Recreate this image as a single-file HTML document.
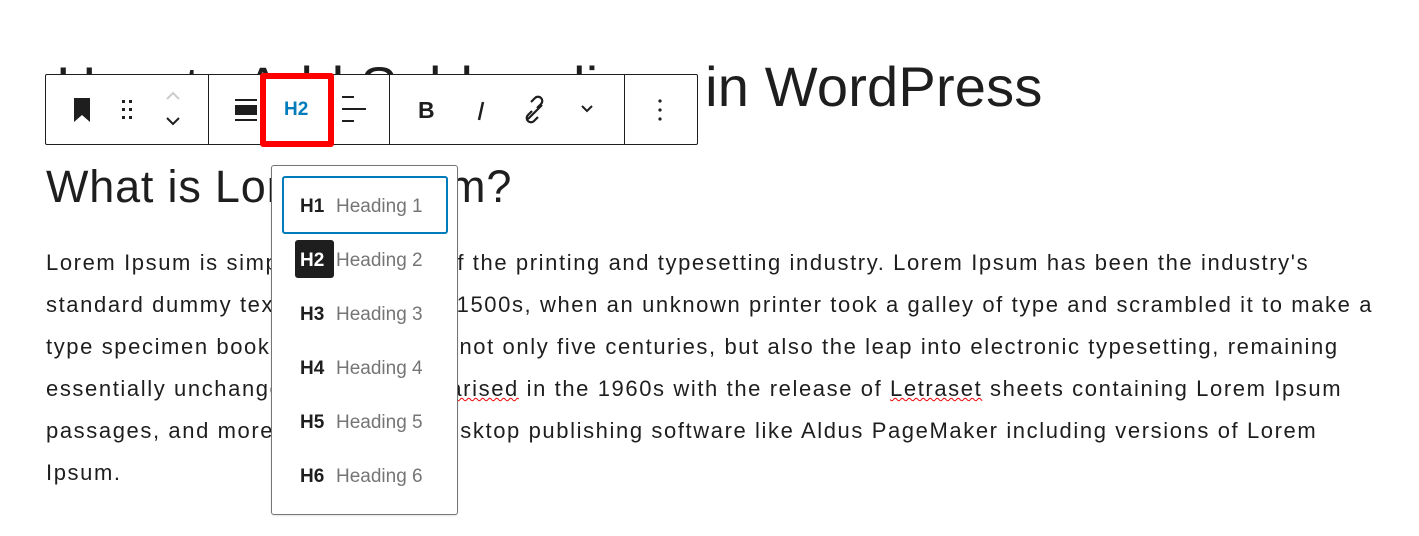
<!DOCTYPE html>
<html><head><meta charset="utf-8"><style>
body{margin:0;width:1419px;height:536px;background:#fff;overflow:hidden;position:relative;font-family:"Liberation Sans",sans-serif;color:#1e1e1e}
.a{position:absolute;white-space:nowrap}
.t{font-size:56px;left:56px;top:54px;letter-spacing:0.2px}
.h2{font-size:45px;left:46px;top:161px;letter-spacing:0.8px}
.p{font-size:22px;left:46px;letter-spacing:1.6px}
.tb{position:absolute;left:45px;top:74px;width:651px;height:69px;border:1px solid #1e1e1e;border-radius:2px;background:#fff}
.sep{position:absolute;top:0;width:1px;height:69px;background:#1e1e1e}
.red{position:absolute;left:260px;top:73px;width:62px;height:62px;border:6px solid #f00;border-radius:3px}
.dd{position:absolute;left:271px;top:165px;width:185px;height:348px;border:1px solid #757575;border-radius:3px;background:#fff;box-shadow:0 1px 2px rgba(0,0,0,.1)}
.it{position:absolute;left:28px;font-size:19px;color:#757575}
.it b{color:#1e1e1e;font-size:19px;display:inline-block;width:36px}
.sq{text-decoration:underline wavy #e00;text-decoration-thickness:1px}
</style></head><body>
<div class="a t">How to Add Subheadings in WordPress</div>
<div class="a h2">What is Lorem Ipsum?</div>
<div class="a p" style="top:250px">Lorem Ipsum is simply dummy text of the printing and typesetting industry. Lorem Ipsum has been the industry's</div>
<div class="a p" style="top:292px">standard dummy text ever since the 1500s, when an unknown printer took a galley of type and scrambled it to make a</div>
<div class="a p" style="top:334px">type specimen book. It has survived not only five centuries, but also the leap into electronic typesetting, remaining</div>
<div class="a p" style="top:376px">essentially unchanged. It was popul<span class="sq">arised</span> in the 1960s with the release of <span class="sq">Letraset</span> sheets containing Lorem Ipsum</div>
<div class="a p" style="top:418px">passages, and more recently with desktop publishing software like Aldus PageMaker including versions of Lorem</div>
<div class="a p" style="top:460px">Ipsum.</div>

<div class="tb">
<svg width="651" height="69" style="position:absolute;left:0;top:0" fill="none" stroke="#1e1e1e" stroke-width="2">
<path d="M28 23h16v24l-8-7-8 7z" fill="#1e1e1e" stroke="none"/>
<g fill="#1e1e1e" stroke="none"><rect x="76" y="25" width="3" height="3"/><rect x="83" y="25" width="3" height="3"/><rect x="76" y="33" width="3" height="3"/><rect x="83" y="33" width="3" height="3"/><rect x="76" y="41" width="3" height="3"/><rect x="83" y="41" width="3" height="3"/></g>
<path d="M121 24l6-6 6 6" stroke="#ccc"/><path d="M121 43l6 6 6-6"/>
<path d="M189 25h22M189 45h22"/><rect x="189" y="30" width="22" height="10" fill="#1e1e1e" stroke="none"/>
<path d="M296 22h12M296 34h24M296 46h12"/>
<path d="M437 27l-4 18" stroke-width="2.5"/>
<path d="M536 31l5 5 5-5" stroke-width="2"/>
<g fill="#1e1e1e" stroke="none"><circle cx="614" cy="26" r="1.6"/><circle cx="614" cy="35" r="1.6"/><circle cx="614" cy="44" r="1.6"/></g>
<path d="M486 36l-4 4a4 4 0 0 0 6 6l4-4M491 33l4-4a4 4 0 0 0-6-6l-4 4M482 44l14-14" stroke-width="2.2"/>
</svg>
<div class="a" style="left:372px;top:22px;font-size:23px;font-weight:bold">B</div>
<div class="a" style="left:238px;top:24px;font-size:19px;font-weight:bold;color:#007cba">H2</div>
<div class="sep" style="left:162px"></div>
<div class="sep" style="left:343px"></div>
<div class="sep" style="left:578px"></div>
</div>
<div class="red"></div>

<div class="dd">
<div style="position:absolute;left:10px;top:10px;width:162px;height:54px;border:2px solid #007cba;border-radius:3px"></div>
<div class="it" style="top:30px"><b>H1</b>Heading 1</div>
<div style="position:absolute;left:23px;top:74px;width:39px;height:38px;background:#1e1e1e;border-radius:3px"></div>
<div class="it" style="top:84px"><b style="color:#fff">H2</b>Heading 2</div>
<div class="it" style="top:138px"><b>H3</b>Heading 3</div>
<div class="it" style="top:192px"><b>H4</b>Heading 4</div>
<div class="it" style="top:246px"><b>H5</b>Heading 5</div>
<div class="it" style="top:300px"><b>H6</b>Heading 6</div>
</div>
</body></html>
